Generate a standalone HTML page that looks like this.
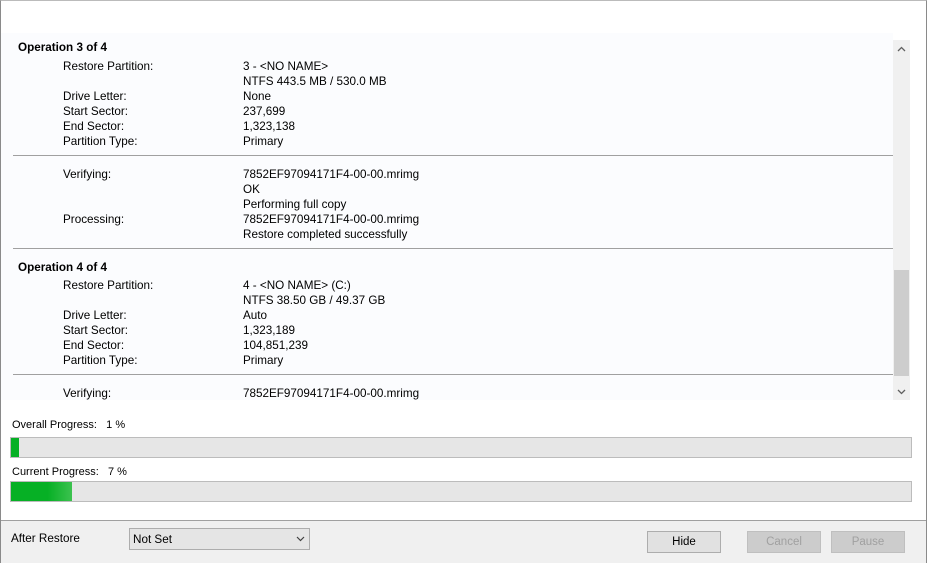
<!DOCTYPE html>
<html><head><meta charset="utf-8"><style>
body{margin:0;width:927px;height:563px;overflow:hidden;background:#fff;font-family:"Liberation Sans",sans-serif;font-size:11.7px;color:#000;position:relative}
.a{position:absolute;white-space:nowrap;line-height:15px}
.b{font-weight:bold}
.hr{position:absolute;left:13px;width:880px;height:1px;background:#a0a0a0}
.btn{position:absolute;top:531px;width:72px;height:20px;border:1px solid #adadad;background:#e1e1e1;text-align:center;line-height:20px;font-size:11.5px}
.dis{color:#a0a0a0;border-color:#bfbfbf;background:#cccccc}
.bar{position:absolute;left:10px;width:900px;height:19px;border:1px solid #bcbcbc;background:#e6e6e6}
</style></head><body>
<div style="position:absolute;left:0;top:0;width:925px;height:561px;border:1px solid #8a8a8a;border-top:1px solid #bbb"></div>
<div style="position:absolute;left:1px;top:33px;width:892px;height:367px;background:#fbfcfe"></div>
<div style="position:absolute;left:893px;top:40px;width:17px;height:360px;background:#f0f0f0"></div>
<div style="position:absolute;left:894px;top:270px;width:15px;height:106px;background:#cdcdcd"></div>
<svg style="position:absolute;left:897px;top:46px" width="9" height="6"><path d="M1 5L4.5 1.5L8 5" stroke="#606060" stroke-width="1.3" fill="none"/></svg>
<svg style="position:absolute;left:897px;top:389px" width="9" height="6"><path d="M1 1L4.5 4.5L8 1" stroke="#606060" stroke-width="1.3" fill="none"/></svg>

<div class="a b" style="left:18px;top:40px">Operation 3 of 4</div>
<div class="a" style="left:63px;top:59px">Restore Partition:</div><div class="a" style="left:243px;top:59px">3 - &lt;NO NAME&gt;</div>
<div class="a" style="left:243px;top:74px">NTFS 443.5 MB / 530.0 MB</div>
<div class="a" style="left:63px;top:89px">Drive Letter:</div><div class="a" style="left:243px;top:89px">None</div>
<div class="a" style="left:63px;top:104px">Start Sector:</div><div class="a" style="left:243px;top:104px">237,699</div>
<div class="a" style="left:63px;top:119px">End Sector:</div><div class="a" style="left:243px;top:119px">1,323,138</div>
<div class="a" style="left:63px;top:134px">Partition Type:</div><div class="a" style="left:243px;top:134px">Primary</div>
<div class="hr" style="top:155px"></div>
<div class="a" style="left:63px;top:167px">Verifying:</div><div class="a" style="left:243px;top:167px">7852EF97094171F4-00-00.mrimg</div>
<div class="a" style="left:243px;top:182px">OK</div>
<div class="a" style="left:243px;top:197px">Performing full copy</div>
<div class="a" style="left:63px;top:212px">Processing:</div><div class="a" style="left:243px;top:212px">7852EF97094171F4-00-00.mrimg</div>
<div class="a" style="left:243px;top:227px">Restore completed successfully</div>
<div class="hr" style="top:248px"></div>
<div class="a b" style="left:18px;top:260px">Operation 4 of 4</div>
<div class="a" style="left:63px;top:278px">Restore Partition:</div><div class="a" style="left:243px;top:278px">4 - &lt;NO NAME&gt; (C:)</div>
<div class="a" style="left:243px;top:293px">NTFS 38.50 GB / 49.37 GB</div>
<div class="a" style="left:63px;top:308px">Drive Letter:</div><div class="a" style="left:243px;top:308px">Auto</div>
<div class="a" style="left:63px;top:323px">Start Sector:</div><div class="a" style="left:243px;top:323px">1,323,189</div>
<div class="a" style="left:63px;top:338px">End Sector:</div><div class="a" style="left:243px;top:338px">104,851,239</div>
<div class="a" style="left:63px;top:353px">Partition Type:</div><div class="a" style="left:243px;top:353px">Primary</div>
<div class="hr" style="top:374px"></div>
<div class="a" style="left:63px;top:386px">Verifying:</div><div class="a" style="left:243px;top:386px">7852EF97094171F4-00-00.mrimg</div>

<div class="a" style="left:12px;top:418px;font-size:11px">Overall Progress:&nbsp;&nbsp; 1 %</div>
<div class="bar" style="top:437px"><div style="width:8px;height:19px;background:#06b025"></div></div>
<div class="a" style="left:12px;top:465px;font-size:11px">Current Progress:&nbsp;&nbsp; 7 %</div>
<div class="bar" style="top:481px"><div style="width:61px;height:19px;background:linear-gradient(90deg,#06b025 60%,#3cc24f)"></div></div>

<div style="position:absolute;left:1px;top:520px;width:925px;height:42px;background:#f0f0f0;border-top:1px solid #a0a0a0"></div>
<div class="a" style="left:11px;top:531px">After Restore</div>
<div style="position:absolute;left:129px;top:528px;width:179px;height:20px;border:1px solid #adadad;background:#e5e5e5"></div>
<div class="a" style="left:133px;top:532px">Not Set</div>
<svg style="position:absolute;left:296px;top:536px" width="9" height="6"><path d="M1 1L4.5 4.5L8 1" stroke="#404040" stroke-width="1.2" fill="none"/></svg>
<div class="btn" style="left:647px">Hide</div>
<div class="btn dis" style="left:747px">Cancel</div>
<div class="btn dis" style="left:831px">Pause</div>
</body></html>
